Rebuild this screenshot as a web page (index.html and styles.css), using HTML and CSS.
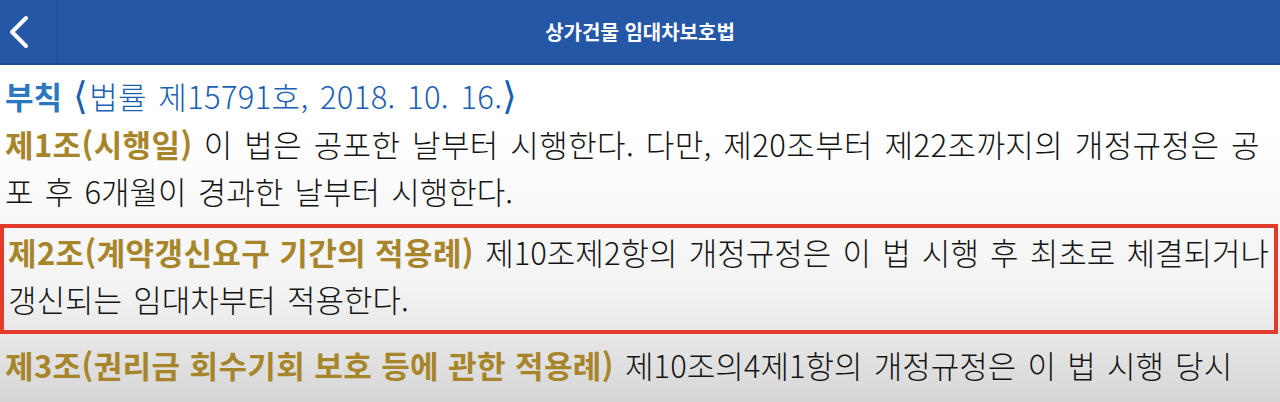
FILE: index.html
```html
<!DOCTYPE html>
<html lang="ko">
<head>
<meta charset="utf-8">
<link rel="stylesheet" href="styles.css">
</head>
<body>
<header class="appbar">
  <div class="back">
    <svg width="24" height="34" viewBox="0 0 24 34"><path d="M19 3 L5 17 L19 31" fill="none" stroke="#fff" stroke-width="4" stroke-linecap="round" stroke-linejoin="round"/></svg>
  </div>
  <div class="title">상가건물 임대차보호법</div>
</header>
<main class="content">
  <p class="line"><span class="head">부칙</span> <span class="law"><span class="br">⟨</span>법률 제15791호, 2018. 10. 16.<span class="br">⟩</span></span></p>
  <p class="article"><span class="art">제1조(시행일)</span> <span class="wide">이 법은 공포한 날부터 시행한다. 다만, 제20조부터 제22조까지의 개정규정은 공</span><br>포 후 6개월이 경과한 날부터 시행한다.</p>
  <div class="highlight">
    <p class="article"><span class="art">제2조(계약갱신요구 기간의 적용례)</span> 제10조제2항의 개정규정은 이 법 시행 후 최초로 체결되거나<br>갱신되는 임대차부터 적용한다.</p>
  </div>
  <p class="article"><span class="art">제3조(권리금 회수기회 보호 등에 관한 적용례)</span> 제10조의4제1항의 개정규정은 이 법 시행 당시</p>
</main>
</body>
</html>
```
FILE: styles.css
```css
html, body {
  margin: 0;
  padding: 0;
  height: 402px;
  overflow: hidden;
}
body {
  background: linear-gradient(to bottom, #ffffff 0px, #ffffff 130px, #f3f3f3 290px, #d6d6d6 402px);
  font-family: "Noto Sans CJK KR", "Noto Sans", sans-serif;
}
.appbar {
  height: 63px;
  background: #2457a6;
  border-bottom: 2px solid #1b4891;
  display: flex;
  align-items: center;
}
.back {
  width: 57px;
  height: 63px;
  border-right: 1px solid #1f4e9a;
  display: flex;
  align-items: center;
  justify-content: center;
  box-sizing: border-box;
  padding-right: 18px;
}
.title {
  flex: 1;
  text-align: center;
  color: #fff;
  font-weight: 700;
  font-size: 20px;
  padding-right: 57px;
  padding-bottom: 1px;
}
.content {
  padding: 7px 0 0 5px;
}
.line, .article {
  margin: 0;
  font-size: 31px;
  line-height: 47px;
  color: #141414;
  font-weight: 300;
  letter-spacing: 0;
  word-spacing: 2.5px;
  white-space: nowrap;
}
.wide {
  letter-spacing: 0.4px;
}
.head {
  color: #2b78bf;
  font-weight: 700;
  letter-spacing: 0;
}
.law {
  color: #1b5fb3;
  letter-spacing: 0.3px;
}
.br {
  font-family: "DejaVu Sans", sans-serif;
  font-weight: 200;
  font-size: 38px;
  letter-spacing: 1px;
}
.art {
  color: #a7852a;
  font-weight: 700;
  letter-spacing: 0.4px;
  word-spacing: 0;
}
.highlight {
  margin: 10px 2px 7px -5px;
  border: 4px solid #e23b2a;
  padding: 0 0 8px 4px;
}
```
